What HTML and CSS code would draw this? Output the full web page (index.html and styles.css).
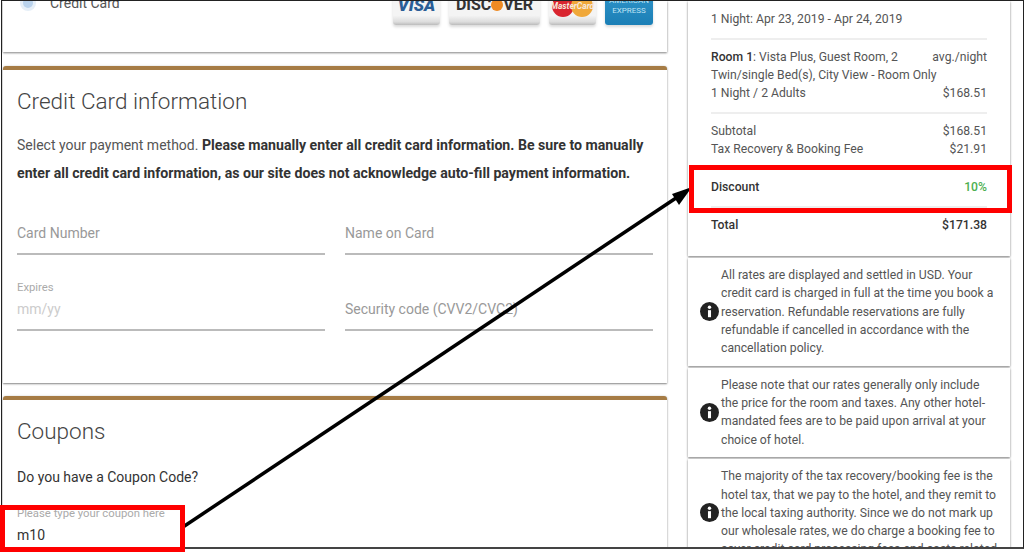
FILE: index.html
```html
<!DOCTYPE html>
<html lang="en">

<head>
    <meta charset="UTF-8">
    <meta name="viewport" content="width=device-width, initial-scale=1.0">
    <title>Payment</title>
    <link rel="stylesheet" href="styles.css">
</head>

<body>
    <div class="page">
        <div class="frame">
            <!-- Left column -->
            <div class="left">
                <section class="card method-card">
                    <div class="method">
                        <div class="method-name">
                            <span class="radio"></span>
                            <span>Credit Card</span>
                        </div>
                        <div class="logos">
                            <div class="logo visa">VISA</div>
                            <div class="logo discover">DISC<span class="disc-o"></span>VER</div>
                            <div class="logo master">
                                <span class="mc-red"></span>
                                <span class="mc-yellow"></span>
                                <span class="mc-text">MasterCard</span>
                            </div>
                            <div class="logo amex">AMERICAN<br>EXPRESS</div>
                        </div>
                    </div>
                </section>

                <section class="card accent">
                    <h2>Credit Card information</h2>
                    <p>Select your payment method. <b>Please manually enter all credit card information. Be sure to manually enter all credit card information, as our site does not acknowledge auto-fill payment information.</b></p>
                    <div class="fields">
                        <div class="field">
                            <div class="small-label"></div>
                            <div class="value">Card Number</div>
                        </div>
                        <div class="field">
                            <div class="small-label"></div>
                            <div class="value">Name on Card</div>
                        </div>
                        <div class="field">
                            <div class="small-label">Expires</div>
                            <div class="value hint">mm/yy</div>
                        </div>
                        <div class="field">
                            <div class="small-label"></div>
                            <div class="value">Security code (CVV2/CVC2)</div>
                        </div>
                    </div>
                </section>

                <section class="card accent">
                    <h2>Coupons</h2>
                    <p class="question">Do you have a Coupon Code?</p>
                    <div class="fields">
                        <div class="field">
                            <div class="small-label">Please type your coupon here</div>
                            <div class="value filled">m10</div>
                        </div>
                    </div>
                </section>
            </div>

            <!-- Right column -->
            <div class="right">
                <section class="card summary">
                    <div>1 Night: Apr 23, 2019 - Apr 24, 2019</div>
                    <hr>
                    <div class="room">
                        <span class="avg">avg./night</span>
                        <b>Room 1</b>: Vista Plus, Guest Room, 2 Twin/single Bed(s), City View - Room Only
                    </div>
                    <div class="line"><span>1 Night / 2 Adults</span><span>$168.51</span></div>
                    <hr>
                    <div class="line"><span>Subtotal</span><span>$168.51</span></div>
                    <div class="line"><span>Tax Recovery &amp; Booking Fee</span><span>$21.91</span></div>
                    <div class="line strong discount"><span>Discount</span><span class="green">10%</span></div>
                    <hr>
                    <div class="line strong"><span>Total</span><span>$171.38</span></div>
                </section>

                <section class="card info">
                    <svg class="info-icon" viewBox="0 0 20 20"><circle cx="10" cy="10" r="10" fill="#222"/><circle cx="10" cy="5.6" r="1.8" fill="#fff"/><rect x="8.4" y="8.6" width="3.2" height="7.4" fill="#fff"/></svg>
                    <div>All rates are displayed and settled in USD. Your credit card is charged in full at the time you book a reservation. Refundable reservations are fully refundable if cancelled in accordance with the cancellation policy.</div>
                </section>
                <section class="card info">
                    <svg class="info-icon" viewBox="0 0 20 20"><circle cx="10" cy="10" r="10" fill="#222"/><circle cx="10" cy="5.6" r="1.8" fill="#fff"/><rect x="8.4" y="8.6" width="3.2" height="7.4" fill="#fff"/></svg>
                    <div>Please note that our rates generally only include the price for the room and taxes. Any other hotel-mandated fees are to be paid upon arrival at your choice of hotel.</div>
                </section>
                <section class="card info">
                    <svg class="info-icon" viewBox="0 0 20 20"><circle cx="10" cy="10" r="10" fill="#222"/><circle cx="10" cy="5.6" r="1.8" fill="#fff"/><rect x="8.4" y="8.6" width="3.2" height="7.4" fill="#fff"/></svg>
                    <div>The majority of the tax recovery/booking fee is the hotel tax, that we pay to the hotel, and they remit to the local taxing authority. Since we do not mark up our wholesale rates, we do charge a booking fee to cover credit card processing fees and costs related</div>
                </section>
            </div>
        </div>

        <!-- Annotations drawn over the screenshot -->
        <svg class="arrow" viewBox="0 0 1024 552">
            <line x1="183" y1="527" x2="682" y2="194" stroke="#000" stroke-width="3.5"/>
            <polygon points="692,187 672,194 679,205" fill="#000"/>
        </svg>
        <div class="mark mark-coupon"></div>
        <div class="mark mark-discount"></div>
    </div>
</body>

</html>
```

FILE: styles.css
```css
* {
    box-sizing: border-box;
}

html, body {
    margin: 0;
    height: 552px;
    overflow: hidden;
    background-color: white;
}

body {
    font-family: Roboto, sans-serif;
    color: #555;
}

.page {
    position: relative;
    width: 1024px;
    height: 552px;
    overflow: hidden;
}

.frame {
    display: flex;
    gap: 21px;
    width: 1023px;
    height: 549px;
    margin-left: 1px;
    padding-left: 1px;
    border: 1px solid #222;
    border-bottom-width: 2px;
    border-bottom-color: #444;
    overflow: hidden;
}

.left {
    display: flex;
    flex-direction: column;
    gap: 13px;
    width: 664px;
    flex-shrink: 0;
}

.right {
    display: flex;
    flex-direction: column;
    gap: 2px;
    width: 322px;
    flex-shrink: 0;
    font-size: 12.2px;
    line-height: 18px;
}

.card {
    flex-shrink: 0;
    background-color: white;
    box-shadow: 0 1px 2px rgba(0, 0, 0, 0.45), 0 0 3px rgba(0, 0, 0, 0.1);
}

/* Payment method */
.method-card {
    height: 51px;
    margin-bottom: 1px;
    padding: 0 14px 0 20px;
}

.method {
    display: flex;
    justify-content: space-between;
    margin-top: -8px;
}

.method-name {
    display: flex;
    align-items: center;
    gap: 17px;
    height: 20px;
    font-size: 14px;
}

.radio {
    width: 10px;
    height: 10px;
    border-radius: 50%;
    background-color: #b9d2ec;
    box-shadow: 0 0 0 3px #e6eff8;
}

.logos {
    display: flex;
    gap: 9px;
}

.logo {
    display: flex;
    align-items: center;
    justify-content: center;
    position: relative;
    width: 47px;
    height: 32px;
    padding-bottom: 9px;
    border-radius: 3px;
    background: linear-gradient(#f4f4f4 70%, #ddd 90%, #bbb);
    box-shadow: 0 2px 3px rgba(0, 0, 0, 0.15);
    overflow: hidden;
}

.visa {
    font-size: 17px;
    font-weight: 900;
    font-style: italic;
    color: #2a5d96;
}

.discover {
    width: 91px;
    font-size: 16px;
    font-weight: 700;
    color: #333;
}

.disc-o {
    width: 12px;
    height: 12px;
    border-radius: 50%;
    background-color: #ee8a22;
}

.mc-red, .mc-yellow {
    position: absolute;
    top: 2px;
    width: 22px;
    height: 22px;
    border-radius: 50%;
}

.mc-red {
    left: 3px;
    background-color: #d9252f;
}

.mc-yellow {
    right: 3px;
    background-color: #f0a83a;
}

.mc-text {
    position: relative;
    top: 1px;
    font-size: 8.5px;
    font-weight: 700;
    font-style: italic;
    color: #f6e9dd;
}

.amex {
    width: 48px;
    padding-bottom: 7px;
    background: linear-gradient(#2f93c8, #1b7fb6);
    font-size: 8px;
    line-height: 10px;
    text-align: center;
    color: #bfe3f4;
}

/* Left sections */
.accent {
    padding: 0 14px;
    border-top: 4px solid #a67c45;
    border-radius: 3px 3px 0 0;
}

.accent:nth-child(2) {
    height: 317px;
}

h2 {
    margin: 15px 0 14px;
    font-size: 22.5px;
    font-weight: 300;
    line-height: 32px;
    color: #444;
}

p {
    margin: 0;
    font-size: 14px;
    line-height: 28px;
}

p b {
    font-size: 14.13px;
    font-weight: 700;
    color: #333;
}

.question {
    margin: 16px 0 -2px;
    color: #333;
}

h2 + .question {
    margin-top: 16px;
}

.fields {
    display: grid;
    grid-template-columns: 308px 308px;
    gap: 8px 20px;
}

.field {
    height: 68px;
    padding-top: 18px;
    border-bottom: 2px solid #bbb;
}

.small-label {
    height: 14px;
    margin-bottom: 3px;
    font-size: 11.3px;
    line-height: 14px;
    color: #aaa;
}

.value {
    font-size: 14px;
    line-height: 22px;
    color: #999;
}

.hint {
    color: #ccc;
}

.filled {
    color: #333;
}

/* Booking summary */
.summary {
    padding: 9px 23px 22px;
}

hr {
    height: 2px;
    margin: 10px 0 8px;
    border: none;
    background-color: #eee;
}

.avg {
    float: right;
}

.room b, .strong {
    font-weight: 500;
    color: #333;
}

.line {
    display: flex;
    justify-content: space-between;
}

.discount {
    margin-top: 20px;
}

.green {
    color: #4caf50;
}

.info {
    display: flex;
    align-items: center;
    gap: 2px;
    padding: 8px 12px 8.5px 12px;
    line-height: 18.25px;
}

.info-icon {
    width: 19px;
    height: 19px;
    flex-shrink: 0;
}

/* Annotations */
.arrow {
    position: absolute;
    top: 0;
    left: 0;
    width: 1024px;
    height: 552px;
}

.mark {
    position: absolute;
    border: 5px solid #f00;
}

.mark-coupon {
    top: 505px;
    left: 0;
    width: 185px;
    height: 47px;
}

.mark-discount {
    top: 165px;
    left: 689px;
    width: 323px;
    height: 48px;
}
```
